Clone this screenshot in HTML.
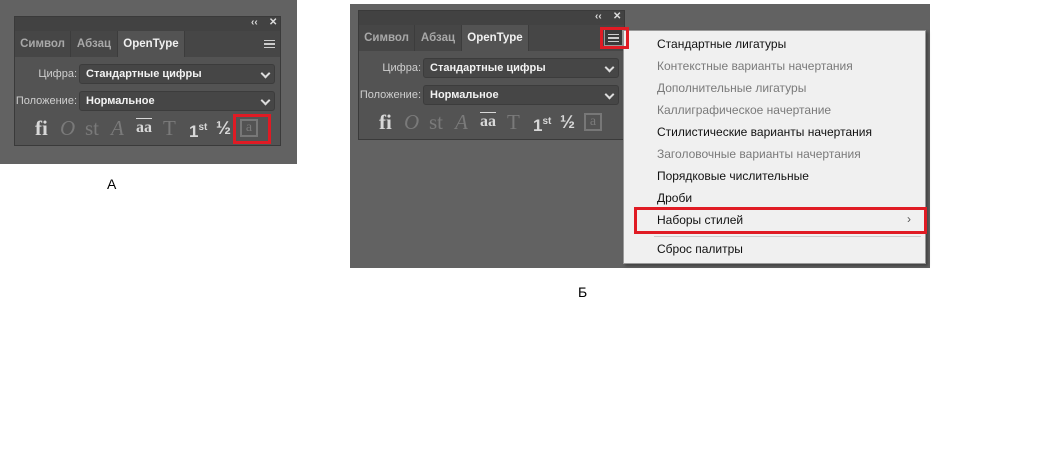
<!DOCTYPE html>
<html><head><meta charset="utf-8"><style>
*{margin:0;padding:0;box-sizing:border-box}
body{width:1057px;height:450px;background:#fff;position:relative;overflow:hidden;font-family:"Liberation Sans",sans-serif}
.bg{position:absolute;background:#626262}
.panel{position:absolute;width:267px;height:130px;background:#535353;border:1px solid #3a3a3a}
.tb{position:absolute;left:0;top:0;width:100%;height:14px;background:#424242}
.tb span{position:absolute;top:0;font-size:10px;color:#ddd;font-weight:bold}
.tabs{position:absolute;left:0;top:14px;width:100%;height:26px;background:#464646}
.tab{position:absolute;top:0;height:26px;line-height:26px;font-size:11.5px;font-weight:bold;color:#a8a8a8;text-align:center;border-right:1px solid #3c3c3c}
.tab.a{background:#535353;color:#f0f0f0}
.ham{position:absolute;top:9px;width:11px;height:8px;border-top:1px solid #ccc;border-bottom:1px solid #ccc}
.ham:after{content:"";position:absolute;left:0;top:2px;width:11px;height:2px;border-top:1px solid #ccc;border-bottom:1px solid #ccc;box-sizing:border-box}
.lbl{position:absolute;font-size:11px;color:#cfcfcf;text-align:right}
.dd{position:absolute;height:20px;background:#464646;border:1px solid #3c3c3c;border-radius:3px;font-size:11px;font-weight:bold;color:#f2f2f2;line-height:18px;padding-left:6px}
.dd:after{content:"";position:absolute;right:5px;top:5px;width:5px;height:5px;border-right:2px solid #ddd;border-bottom:2px solid #ddd;transform:rotate(45deg)}
.ic{position:absolute;top:99px;font-family:"Liberation Serif",serif;font-size:21px;color:#7a7a7a;line-height:24px}
.ic.w{color:#d8d8d8;font-weight:bold}
.red{position:absolute;border:3px solid #e01b24}
.menu{position:absolute;left:623px;top:30px;width:303px;height:234px;background:#f0f0f0;border:1px solid #999;box-shadow:2px 2px 3px rgba(0,0,0,.35)}
.mi{position:absolute;left:33px;font-size:12px;color:#111}
.mi.g{color:#7a7a7a}
.cap{position:absolute;font-size:14px;color:#000}
</style></head><body>
<div class="bg" style="left:0;top:0;width:297px;height:164px"></div>
<div class="bg" style="left:350px;top:4px;width:580px;height:264px"></div>

<!-- Panel A -->
<div class="panel" style="left:14px;top:16px">
 <div class="tb"><span style="left:236px">‹‹</span><span style="left:254px">✕</span></div>
 <div class="tabs">
  <div class="tab" style="left:0;width:56px">Символ</div>
  <div class="tab" style="left:56px;width:47px">Абзац</div>
  <div class="tab a" style="left:103px;width:67px">OpenType</div>
  <div class="ham" style="left:249px"></div>
 </div>
 <div class="lbl" style="left:0;width:62px;top:51px">Цифра:</div>
 <div class="dd" style="left:64px;top:47px;width:196px">Стандартные цифры</div>
 <div class="lbl" style="left:0;width:62px;top:78px">Положение:</div>
 <div class="dd" style="left:64px;top:74px;width:196px">Нормальное</div>
 <div class="ic w" style="left:20px">fi</div>
 <div class="ic" style="left:45px;font-style:italic">O</div>
 <div class="ic" style="left:70px">st</div>
 <div class="ic" style="left:96px;font-style:italic">A</div>
 <div class="ic w" style="left:121px;font-size:16px;text-decoration:overline">aa</div>
 <div class="ic" style="left:148px">T</div>
 <div class="ic w" style="left:174px;font-family:'Liberation Sans';font-size:17px">1<span style="font-size:10px;vertical-align:7px">st</span></div>
 <div class="ic w" style="left:201px;font-family:'Liberation Sans';font-size:18px">½</div>
 <div class="ic" style="left:225px;font-size:14px;border:2px solid #777;width:18px;height:18px;top:102px;line-height:14px;text-align:center">a</div>
</div>
<div class="red" style="left:233px;top:114px;width:38px;height:30px"></div>
<div class="cap" style="left:107px;top:176px">А</div>

<!-- Panel B -->
<div class="panel" style="left:358px;top:10px">
 <div class="tb"><span style="left:236px">‹‹</span><span style="left:254px">✕</span></div>
 <div class="tabs">
  <div class="tab" style="left:0;width:56px">Символ</div>
  <div class="tab" style="left:56px;width:47px">Абзац</div>
  <div class="tab a" style="left:103px;width:67px">OpenType</div>
  <div style="position:absolute;left:245px;top:4px;width:19px;height:17px;border:1px solid #999;background:#3a3a3a"></div>
  <div class="ham" style="left:249px"></div>
 </div>
 <div class="lbl" style="left:0;width:62px;top:51px">Цифра:</div>
 <div class="dd" style="left:64px;top:47px;width:196px">Стандартные цифры</div>
 <div class="lbl" style="left:0;width:62px;top:78px">Положение:</div>
 <div class="dd" style="left:64px;top:74px;width:196px">Нормальное</div>
 <div class="ic w" style="left:20px">fi</div>
 <div class="ic" style="left:45px;font-style:italic">O</div>
 <div class="ic" style="left:70px">st</div>
 <div class="ic" style="left:96px;font-style:italic">A</div>
 <div class="ic w" style="left:121px;font-size:16px;text-decoration:overline">aa</div>
 <div class="ic" style="left:148px">T</div>
 <div class="ic w" style="left:174px;font-family:'Liberation Sans';font-size:17px">1<span style="font-size:10px;vertical-align:7px">st</span></div>
 <div class="ic w" style="left:201px;font-family:'Liberation Sans';font-size:18px">½</div>
 <div class="ic" style="left:225px;font-size:14px;border:2px solid #777;width:18px;height:18px;top:102px;line-height:14px;text-align:center">a</div>
</div>

<div class="menu">
 <div class="mi" style="top:6px">Стандартные лигатуры</div>
 <div class="mi g" style="top:28px">Контекстные варианты начертания</div>
 <div class="mi g" style="top:50px">Дополнительные лигатуры</div>
 <div class="mi g" style="top:72px">Каллиграфическое начертание</div>
 <div class="mi" style="top:94px">Стилистические варианты начертания</div>
 <div class="mi g" style="top:116px">Заголовочные варианты начертания</div>
 <div class="mi" style="top:138px">Порядковые числительные</div>
 <div class="mi" style="top:160px">Дроби</div>
 <div class="mi" style="top:182px">Наборы стилей</div>
 <div class="mi" style="top:181px;left:283px;color:#555">›</div>
 <div style="position:absolute;left:30px;right:4px;top:205px;height:1px;background:#ccc"></div>
 <div class="mi" style="top:211px">Сброс палитры</div>
</div>
<div class="red" style="left:600px;top:27px;width:29px;height:22px"></div>
<div class="red" style="left:634px;top:207px;width:293px;height:27px"></div>
<div class="cap" style="left:578px;top:284px">Б</div>
</body></html>
